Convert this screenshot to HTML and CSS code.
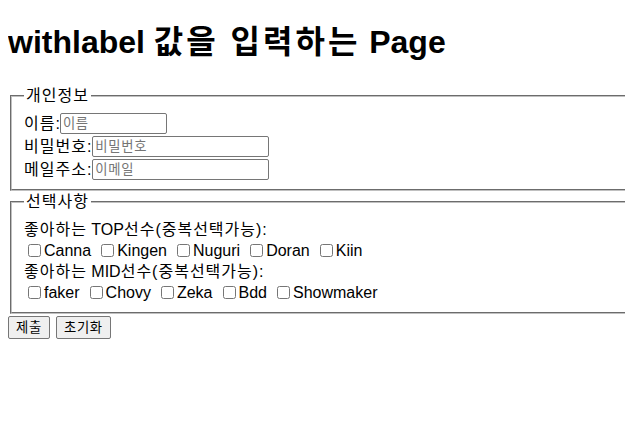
FILE: index.html
```
<!DOCTYPE html>
<html lang="ko">
<head>
<meta charset="utf-8">
<title>withlabel</title>
<link rel="stylesheet" href="styles.css">
</head>
<body>
<h1 class="title">withlabel <span class="ko-title">값을 입력하는</span> Page</h1>
<form class="form">
  <fieldset class="group group-info">
    <legend class="legend ko">개인정보</legend>
    <div class="row"><label class="ko" for="name">이름:</label><input class="field field-short" id="name" type="text" placeholder="이름"></div>
    <div class="row"><label class="ko" for="pw">비밀번호:</label><input class="field field-long" id="pw" type="password" placeholder="비밀번호"></div>
    <div class="row"><label class="ko" for="mail">메일주소:</label><input class="field field-long" id="mail" type="email" placeholder="이메일"></div>
  </fieldset>
  <fieldset class="group group-pick">
    <legend class="legend ko">선택사항</legend>
    <div class="line"><span class="ko">좋아하는</span>&nbsp;TOP<span class="ko">선수(중복선택가능):</span></div>
    <div class="line checks">
      <input class="check" type="checkbox" id="t1"><label for="t1">Canna</label>
      <input class="check" type="checkbox" id="t2"><label for="t2">Kingen</label>
      <input class="check" type="checkbox" id="t3"><label for="t3">Nuguri</label>
      <input class="check" type="checkbox" id="t4"><label for="t4">Doran</label>
      <input class="check" type="checkbox" id="t5"><label for="t5">Kiin</label>
    </div>
    <div class="line"><span class="ko">좋아하는</span>&nbsp;MID<span class="ko">선수(중복선택가능):</span></div>
    <div class="line checks">
      <input class="check" type="checkbox" id="m1"><label for="m1">faker</label>
      <input class="check" type="checkbox" id="m2"><label for="m2">Chovy</label>
      <input class="check" type="checkbox" id="m3"><label for="m3">Zeka</label>
      <input class="check" type="checkbox" id="m4"><label for="m4">Bdd</label>
      <input class="check" type="checkbox" id="m5"><label for="m5">Showmaker</label>
    </div>
  </fieldset>
  <div class="buttons"><button class="btn" type="submit">제출</button><button class="btn" type="reset">초기화</button></div>
</form>
</body>
</html>
```
FILE: styles.css
```
html {
  overflow: hidden;
}
body {
  margin: 0 8px 8px;
  font-family: "Liberation Sans", "Noto Sans CJK KR", sans-serif;
  font-size: 16px;
  line-height: 21px;
  color: #000;
}
.ko {
  letter-spacing: 1px;
}
.title {
  font-family: "Liberation Sans", "Noto Sans CJK KR", sans-serif;
  font-size: 32px;
  font-weight: bold;
  line-height: 42px;
  margin: 21px 0 22px;
  white-space: nowrap;
}
.ko-title {
  letter-spacing: 3px;
}
.form {
  width: 720px;
}
.group {
  margin: 0 2px;
  border: 2px groove rgb(192, 192, 192);
  min-width: 0;
}
.group-info {
  padding: 6px 12px 8px;
}
.group-pick {
  padding: 7px 12px 9px;
}
.legend {
  padding: 0 2px;
  line-height: 21px;
}
.row {
  height: 23px;
  display: flex;
  align-items: center;
  white-space: nowrap;
}
.line {
  height: 21px;
  display: flex;
  align-items: center;
  white-space: nowrap;
}
.field {
  box-sizing: border-box;
  height: 21px;
  margin: 0;
  padding: 0 2px;
  border: 1px solid #767676;
  border-radius: 2px;
  font-family: "Liberation Sans", "Noto Sans CJK KR", sans-serif;
  font-size: 13.33px;
  letter-spacing: 0.7px;
}
.field::placeholder {
  color: #757575;
}
.field-short {
  width: 107px;
  margin-left: -1px;
}
.field-long {
  width: 177px;
}
.check {
  width: 13px;
  height: 13px;
  margin: 0 3px 0 4px;
}
.checks label {
  margin-right: 6px;
}
.buttons {
  display: flex;
  gap: 6px;
  margin-top: 2px;
}
.btn {
  box-sizing: border-box;
  height: 23px;
  padding: 0 7px;
  font-family: "Liberation Sans", "Noto Sans CJK KR", sans-serif;
  font-size: 13.33px;
  letter-spacing: 0.7px;
  line-height: 19px;
  border: 1px solid #767676;
  border-radius: 2px;
  background: #efefef;
  color: #000;
  margin: 0;
}
```
